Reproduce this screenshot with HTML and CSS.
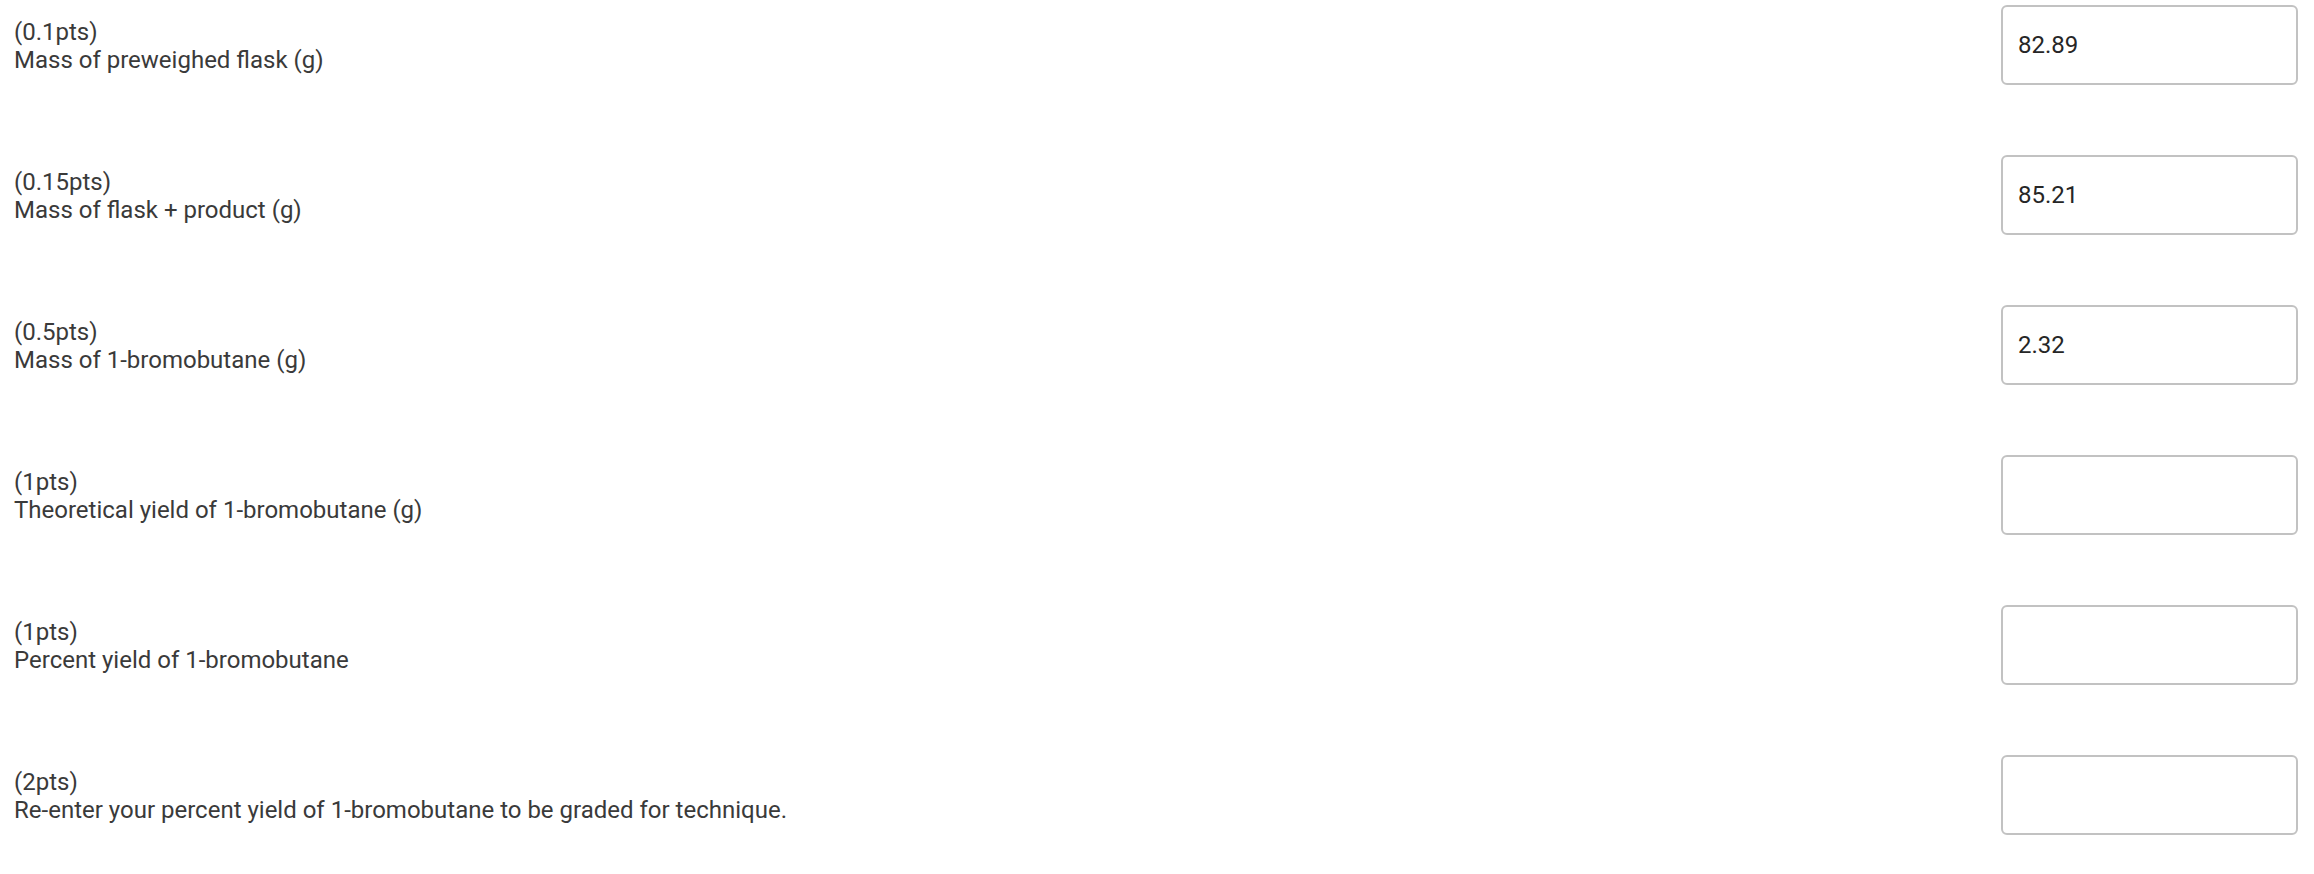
FILE: index.html
```html
<!DOCTYPE html>
<html lang="en">
<head>
<meta charset="utf-8">
<title>Lab results</title>
<link rel="stylesheet" href="styles.css">
</head>
<body>
<form class="questions">
  <div class="row">
    <label class="label" for="q1"><span>(0.1pts)</span><span>Mass of preweighed flask (g)</span></label>
    <input class="answer" id="q1" type="text" value="82.89">
  </div>
  <div class="row">
    <label class="label" for="q2"><span>(0.15pts)</span><span>Mass of flask + product (g)</span></label>
    <input class="answer" id="q2" type="text" value="85.21">
  </div>
  <div class="row">
    <label class="label" for="q3"><span>(0.5pts)</span><span>Mass of 1-bromobutane (g)</span></label>
    <input class="answer" id="q3" type="text" value="2.32">
  </div>
  <div class="row">
    <label class="label" for="q4"><span>(1pts)</span><span>Theoretical yield of 1-bromobutane (g)</span></label>
    <input class="answer" id="q4" type="text" value="">
  </div>
  <div class="row">
    <label class="label" for="q5"><span>(1pts)</span><span>Percent yield of 1-bromobutane</span></label>
    <input class="answer" id="q5" type="text" value="">
  </div>
  <div class="row">
    <label class="label" for="q6"><span>(2pts)</span><span>Re-enter your percent yield of 1-bromobutane to be graded for technique.</span></label>
    <input class="answer" id="q6" type="text" value="">
  </div>
</form>
</body>
</html>
```

FILE: styles.css
```css
html, body {
  margin: 0;
  padding: 0;
  background: #ffffff;
}

body {
  font-family: Roboto, "Liberation Sans", sans-serif;
  color: #3a3a3a;
}

.questions {
  display: flex;
  flex-direction: column;
  gap: 70px;
  padding: 5px 16px 0 14px;
}

.row {
  display: flex;
  justify-content: space-between;
  align-items: flex-start;
  height: 80px;
}

.label {
  display: flex;
  flex-direction: column;
  font-size: 24px;
  line-height: 28px;
  padding-top: 13px;
}

.answer {
  box-sizing: border-box;
  width: 297px;
  height: 80px;
  margin: 0;
  padding: 0 15px;
  border: 2px solid #c2c2c2;
  border-radius: 6px;
  background: #ffffff;
  font-family: Roboto, "Liberation Sans", sans-serif;
  font-size: 24px;
  color: #262626;
  outline: none;
}
```
